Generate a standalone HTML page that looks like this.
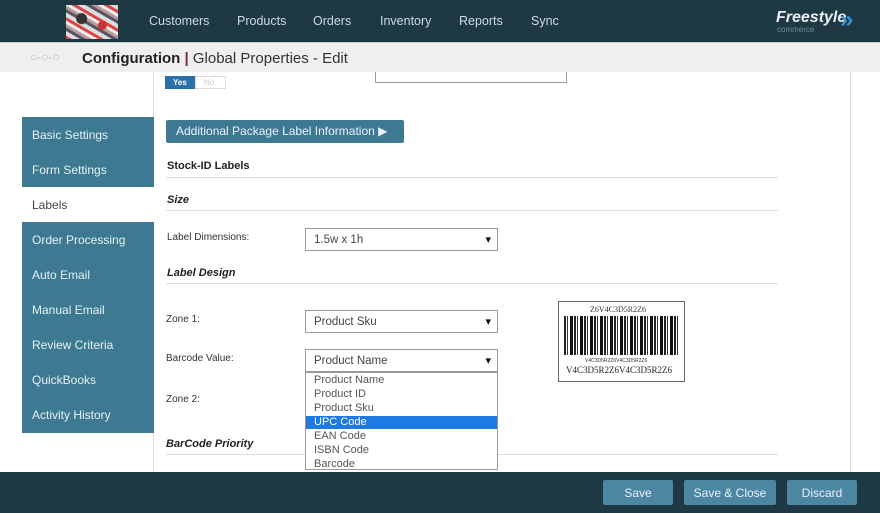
<!DOCTYPE html><html><head><style>
*{margin:0;padding:0;box-sizing:border-box}
body{width:880px;height:513px;overflow:hidden;background:#fff;font-family:"Liberation Sans",sans-serif;position:relative}
.a{position:absolute}
.top{left:0;top:0;width:880px;height:42px;background:#1f3944}
.nav{color:#c9dbe3;font-size:12.5px;top:14px}
.sub{left:0;top:42px;width:880px;height:30px;background:#efefef;border-top:1px solid #c7d0d4}
.side{left:22px;width:132px;height:35px;background:#3d7a91;color:#e6f0f4;font-size:12px;padding:11px 0 0 10px}
.lbl{font-size:10px;color:#333}
.h{font-size:11px;font-weight:bold;color:#222}
.line{height:1px;background:#ddd;left:166px;width:612px}
.sel{border:1px solid #999;background:#fff;height:23px;font-size:11.5px;color:#444;padding:5px 0 0 8px;left:305px;width:193px}
.sel:after{content:"▾";position:absolute;right:6px;top:4px;font-size:11px;color:#111}
.btn{top:480px;height:25px;background:#4b87a0;color:#eef;font-size:12px;text-align:center;padding-top:6px;border-radius:2px}
.opt{left:314px;font-size:11px;color:#555}
</style></head><body>
<div class="a top"></div>
<div class="a" style="left:66px;top:5px;width:52px;height:34px;background:radial-gradient(circle at 30% 40%,#333 0 5px,transparent 6px),radial-gradient(circle at 70% 60%,#c33 0 4px,transparent 5px),repeating-linear-gradient(30deg,#d44 0 3px,#ddd 3px 7px,#556 7px 10px,#b99 10px 13px,#eee 13px 16px)"></div>
<div class="a nav" style="left:149px">Customers</div>
<div class="a nav" style="left:237px">Products</div>
<div class="a nav" style="left:313px">Orders</div>
<div class="a nav" style="left:380px">Inventory</div>
<div class="a nav" style="left:459px">Reports</div>
<div class="a nav" style="left:531px">Sync</div>
<div class="a" style="left:776px;top:9px;color:#e8eef2;font-style:italic;font-weight:bold;font-size:16px">Freestyle</div>
<div class="a" style="left:777px;top:25px;color:#6f8a98;font-size:8px">commerce</div>
<div class="a" style="left:840px;top:6px;color:#3a8fd0;font-size:24px;font-weight:bold">»</div>
<div class="a sub"></div>
<div class="a" style="left:30px;top:50px;color:#bbb;font-size:12px">○-○-○</div>
<div class="a" style="left:82px;top:50px;font-size:15px;font-weight:bold;color:#222">Configuration <span style="color:#7a2a3a">|</span> <span style="font-weight:normal;color:#333">Global Properties - Edit</span></div>
<div class="a" style="left:153px;top:72px;width:1px;height:400px;background:#ddd"></div>
<div class="a" style="left:850px;top:72px;width:1px;height:400px;background:#ddd"></div>
<div class="a" style="left:165px;top:76px;width:30px;height:13px;background:#2b6fa8;color:#fff;font-size:8px;font-weight:bold;padding:2px 0 0 8px">Yes</div>
<div class="a" style="left:195px;top:76px;width:31px;height:13px;border:1px solid #ddd;color:#ccc;font-size:8px;padding:1px 0 0 8px">No</div>
<div class="a" style="left:375px;top:72px;width:192px;height:11px;border:1px solid #999;border-top:none"></div>
<div class="a side" style="top:117px">Basic Settings</div>
<div class="a side" style="top:152px">Form Settings</div>
<div class="a side" style="top:187px;background:#fff;color:#444">Labels</div>
<div class="a side" style="top:222px">Order Processing</div>
<div class="a side" style="top:257px">Auto Email</div>
<div class="a side" style="top:292px">Manual Email</div>
<div class="a side" style="top:327px">Review Criteria</div>
<div class="a side" style="top:362px">QuickBooks</div>
<div class="a side" style="top:397px;height:36px">Activity History</div>
<div class="a" style="left:166px;top:120px;width:238px;height:23px;background:#3d7a91;color:#eef;font-size:12px;padding:4px 0 0 10px;border-radius:2px">Additional Package Label Information ▶</div>
<div class="a h" style="left:167px;top:160px">Stock-ID Labels</div><div class="a line" style="top:177px"></div>
<div class="a h" style="left:167px;top:194px;font-style:italic">Size</div><div class="a line" style="top:210px"></div>
<div class="a lbl" style="left:167px;top:232px">Label Dimensions:</div>
<div class="a sel" style="top:228px">1.5w x 1h</div>
<div class="a h" style="left:167px;top:267px;font-style:italic">Label Design</div><div class="a line" style="top:283px"></div>
<div class="a lbl" style="left:166px;top:314px">Zone 1:</div>
<div class="a sel" style="top:310px">Product Sku</div>
<div class="a lbl" style="left:166px;top:353px">Barcode Value:</div>
<div class="a sel" style="top:349px">Product Name</div>
<div class="a lbl" style="left:166px;top:394px">Zone 2:</div>
<div class="a h" style="left:166px;top:438px;font-style:italic">BarCode Priority</div><div class="a line" style="top:454px"></div>
<div class="a" style="left:305px;top:372px;width:193px;height:98px;border:1px solid #999;background:#fff"></div>
<div class="a opt" style="top:374px">Product Name</div>
<div class="a opt" style="top:388px">Product ID</div>
<div class="a opt" style="top:402px">Product Sku</div>
<div class="a" style="left:306px;top:416px;width:191px;height:13px;background:#1e7ae0"></div>
<div class="a opt" style="top:416px;color:#fff">UPC Code</div>
<div class="a opt" style="top:430px">EAN Code</div>
<div class="a opt" style="top:444px">ISBN Code</div>
<div class="a opt" style="top:458px">Barcode</div>
<div class="a" style="left:558px;top:301px;width:127px;height:81px;border:1px solid #666;background:#fff"></div>
<div class="a" style="left:590px;top:305px;font-family:'Liberation Serif',serif;font-size:8px;color:#333">Z6V4C3D5R2Z6</div>
<div class="a" style="left:564px;top:316px;width:116px;height:39px;background:repeating-linear-gradient(90deg,#222 0 2px,#fff 2px 3px,#333 3px 4px,#fff 4px 6px,#111 6px 9px,#fff 9px 10px)"></div>
<div class="a" style="left:585px;top:358px;font-size:5px;color:#333">V4C3D5R2Z6V4C3D5R2Z6</div>
<div class="a" style="left:566px;top:365px;font-family:'Liberation Serif',serif;font-size:9px;color:#222">V4C3D5R2Z6V4C3D5R2Z6</div>
<div class="a" style="left:0;top:472px;width:880px;height:41px;background:#1f3944"></div>
<div class="a btn" style="left:603px;width:70px">Save</div>
<div class="a btn" style="left:684px;width:92px">Save &amp; Close</div>
<div class="a btn" style="left:787px;width:70px">Discard</div>
</body></html>
